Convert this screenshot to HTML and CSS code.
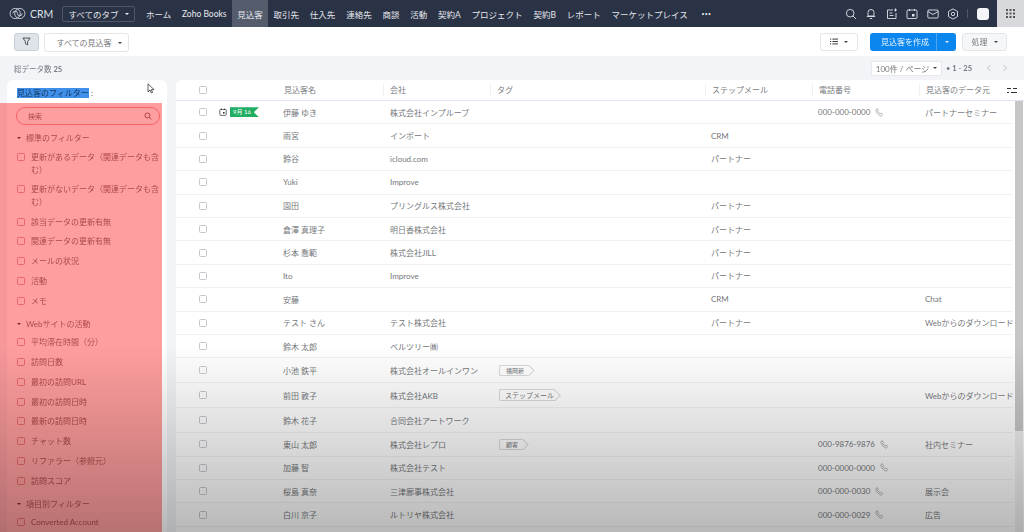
FILE: index.html
```html
<!DOCTYPE html>
<html lang="ja">
<head>
<meta charset="utf-8">
<title>見込客</title>
<link rel="stylesheet" href="styles.css">
</head>
<body>
<svg class="defs" width="0" height="0" aria-hidden="true">
  <symbol id="phone" viewBox="0 0 10 10"><path d="M1.2 1.6 2.6.8l1.3 2-.9.8c.5 1.2 1.4 2.2 2.7 2.8l.9-.8 2.1 1.6-1 1.3c-.3.4-.8.5-1.3.4C3.900 8 1.700 5.700 1 3c-.1-.5 0-1 .2-1.400Z" fill="none" stroke="currentColor" stroke-width=".7"/></symbol>
</svg>
<div class="app">
  <header class="topbar">
    <div class="brand">
      <svg class="logo" viewBox="0 0 18 14"><circle cx="6.500" cy="7" r="5.500"/><circle cx="11.500" cy="7" r="5.500"/><path d="M4 7a2.500 2.500 0 0 1 5 0 2.500 2.500 0 0 0 5 0"/></svg>
      <span>CRM</span>
    </div>
    <div class="tabs-btn">すべてのタブ<i class="caret light"></i></div>
    <nav class="nav">
      <a>ホーム</a><a>Zoho Books</a><a class="active">見込客</a><a>取引先</a><a>仕入先</a><a>連絡先</a><a>商談</a><a>活動</a><a>契約A</a><a>プロジェクト</a><a>契約B</a><a>レポート</a><a>マーケットプレイス</a><a class="dots">•••</a>
    </nav>
    <div class="top-icons">
      <svg viewBox="0 0 12 12"><circle cx="5.200" cy="5.200" r="3.800"/><path d="m8 8 3 3"/></svg>
      <svg viewBox="0 0 12 12"><path d="M6 1.500a3 3 0 0 1 3 3V8H3V4.500a3 3 0 0 1 3-3ZM1.800 8.500h8.400M4.800 10.500h2.400"/></svg>
      <svg viewBox="0 0 12 12"><path d="M7 2H1.500v8.500h8.500V5M3.500 5h3M3.500 7.500h4M9.500 .5v3M8 2h3"/></svg>
      <svg viewBox="0 0 12 12"><rect x="1" y="2" width="10" height="8.500" rx="1"/><path d="M3.500 1v2M8.500 1v2"/><rect class="fill" x="6" y="6" width="2.500" height="2.500"/></svg>
      <svg viewBox="0 0 12 12"><rect x=".8" y="2" width="10.400" height="8" rx="1"/><path d="m1 3.500 5 3 5-3"/></svg>
      <svg viewBox="0 0 12 12"><path d="M6 .9 10.500 3.400v5.200L6 11.100 1.500 8.600V3.400Z"/><circle cx="6" cy="6" r="1.700"/></svg>
      <span class="sep"></span>
      <span class="avatar"></span>
    </div>
    <div class="apps">
      <svg viewBox="0 0 9 9"><rect width="2" height="2"/><rect x="3.500" width="2" height="2"/><rect x="7" width="2" height="2"/><rect y="3.500" width="2" height="2"/><rect x="3.500" y="3.500" width="2" height="2"/><rect x="7" y="3.500" width="2" height="2"/><rect y="7" width="2" height="2"/><rect x="3.500" y="7" width="2" height="2"/><rect x="7" y="7" width="2" height="2"/></svg>
    </div>
  </header>

  <div class="toolbar">
    <button class="filter-btn"><svg viewBox="0 0 10 10"><path d="M1 1.200h8L6.200 5v3.800L3.800 7.500V5Z"/></svg></button>
    <button class="btn view-select">すべての見込客<i class="caret"></i></button>
    <div class="toolbar-right">
      <button class="btn list-btn"><svg viewBox="0 0 10 8"><path d="M0 1h1.500M3 1h7M0 4h1.500M3 4h7M0 7h1.500M3 7h7"/></svg><i class="caret"></i></button>
      <div class="create"><span class="create-main">見込客を作成</span><span class="create-drop"><i class="caret light"></i></span></div>
      <button class="btn action-btn">処理<i class="caret"></i></button>
    </div>
  </div>

  <div class="subbar">
    <span class="total">総データ数 <b>25</b></span>
    <div class="pager">
      <span class="per-page">100件 / ページ<i class="caret"></i></span>
      <span class="range">• <b>1</b> - <b>25</b></span>
      <svg class="chev" viewBox="0 0 6 8"><path d="M4.500 1 1.500 4l3 3"/></svg>
      <svg class="chev" viewBox="0 0 6 8"><path d="M1.500 1l3 3-3 3"/></svg>
    </div>
  </div>

  <main class="content">
    <aside class="side">
      <div class="side-title"><span class="selected">見込客のフィルター</span> :</div>
      <div class="search"><span>検索</span><svg viewBox="0 0 10 10"><circle cx="4.300" cy="4.300" r="3.100"/><path d="m6.600 6.600 2.600 2.600"/></svg></div>
      <h3 class="group first">標準のフィルター</h3>
      <label class="opt"><i></i><span>更新があるデータ（関連データも含む）</span></label>
      <label class="opt"><i></i><span>更新がないデータ（関連データも含む）</span></label>
      <label class="opt"><i></i><span>該当データの更新有無</span></label>
      <label class="opt"><i></i><span>関連データの更新有無</span></label>
      <label class="opt"><i></i><span>メールの状況</span></label>
      <label class="opt"><i></i><span>活動</span></label>
      <label class="opt"><i></i><span>メモ</span></label>
      <h3 class="group">Webサイトの活動</h3>
      <label class="opt"><i></i><span>平均滞在時間（分）</span></label>
      <label class="opt"><i></i><span>訪問日数</span></label>
      <label class="opt"><i></i><span>最初の訪問URL</span></label>
      <label class="opt"><i></i><span>最初の訪問日時</span></label>
      <label class="opt"><i></i><span>最新の訪問日時</span></label>
      <label class="opt"><i></i><span>チャット数</span></label>
      <label class="opt"><i></i><span>リファラー（参照元）</span></label>
      <label class="opt"><i></i><span>訪問スコア</span></label>
      <h3 class="group">項目別フィルター</h3>
      <label class="opt"><i></i><span>Converted Account</span></label>
    </aside>

    <section class="table">
      <div class="thead">
        <div class="c-check"><i class="box"></i></div>
        <div class="th">見込客名</div><div class="th">会社</div><div class="th">タグ</div><div class="th">ステップメール</div><div class="th">電話番号</div><div class="th">見込客のデータ元</div>
        <svg class="cols-icon" viewBox="0 0 10 7"><path d="M0 1.500h4M6 1.500h4M0 5.500h2M4 5.500h6"/></svg>
      </div>
      <div class="tbody">
        <div class="rows">
          <div class="row"><div class="c-check"><i class="box"></i><svg class="cal" viewBox="0 0 10 10"><rect x="1" y="1.800" width="8" height="7.400" rx="1"/><path d="M3 .6v2M7 .6v2"/><rect class="fill" x="5" y="5" width="2" height="2"/></svg><span class="due">9月 16</span></div><div>伊藤 ゆき</div><div>株式会社インプルーブ</div><div></div><div></div><div class="tel">000-000-0000<svg><use href="#phone"/></svg></div><div>パートナーセミナー</div></div>
          <div class="row"><div class="c-check"><i class="box"></i></div><div>雨宮</div><div>インポート</div><div></div><div>CRM</div><div></div><div></div></div>
          <div class="row"><div class="c-check"><i class="box"></i></div><div>鈴谷</div><div>icloud.com</div><div></div><div>パートナー</div><div></div><div></div></div>
          <div class="row"><div class="c-check"><i class="box"></i></div><div>Yuki</div><div>Improve</div><div></div><div></div><div></div><div></div></div>
          <div class="row"><div class="c-check"><i class="box"></i></div><div>園田</div><div>プリングルス株式会社</div><div></div><div>パートナー</div><div></div><div></div></div>
          <div class="row"><div class="c-check"><i class="box"></i></div><div>倉澤 真理子</div><div>明日香株式会社</div><div></div><div>パートナー</div><div></div><div></div></div>
          <div class="row"><div class="c-check"><i class="box"></i></div><div>杉本 喬範</div><div>株式会社JILL</div><div></div><div>パートナー</div><div></div><div></div></div>
          <div class="row"><div class="c-check"><i class="box"></i></div><div>Ito</div><div>Improve</div><div></div><div>パートナー</div><div></div><div></div></div>
          <div class="row"><div class="c-check"><i class="box"></i></div><div>安藤</div><div></div><div></div><div>CRM</div><div></div><div>Chat</div></div>
          <div class="row"><div class="c-check"><i class="box"></i></div><div>テスト さん</div><div>テスト株式会社</div><div></div><div>パートナー</div><div></div><div>Webからのダウンロード</div></div>
          <div class="row"><div class="c-check"><i class="box"></i></div><div>鈴木 太郎</div><div>ベルツリー㈱</div><div></div><div></div><div></div><div></div></div>
          <div class="row tall"><div class="c-check"><i class="box"></i></div><div>小池 鉄平</div><div>株式会社オールインワン</div><div><span class="tag small">福岡新</span></div><div></div><div></div><div></div></div>
          <div class="row tall"><div class="c-check"><i class="box"></i></div><div>前田 敦子</div><div>株式会社AKB</div><div><span class="tag">ステップメール</span></div><div></div><div></div><div>Webからのダウンロード</div></div>
          <div class="row tall"><div class="c-check"><i class="box"></i></div><div>鈴木 花子</div><div>合同会社アートワーク</div><div></div><div></div><div></div><div></div></div>
          <div class="row"><div class="c-check"><i class="box"></i></div><div>東山 太郎</div><div>株式会社レプロ</div><div><span class="tag small">顧客</span></div><div></div><div class="tel">000-9876-9876<svg><use href="#phone"/></svg></div><div>社内セミナー</div></div>
          <div class="row"><div class="c-check"><i class="box"></i></div><div>加藤 智</div><div>株式会社テスト</div><div></div><div></div><div class="tel">000-0000-0000<svg><use href="#phone"/></svg></div><div></div></div>
          <div class="row"><div class="c-check"><i class="box"></i></div><div>桜島 真奈</div><div>三津廊事株式会社</div><div></div><div></div><div class="tel">000-000-0030<svg><use href="#phone"/></svg></div><div>展示会</div></div>
          <div class="row"><div class="c-check"><i class="box"></i></div><div>白川 京子</div><div>ルトリヤ株式会社</div><div></div><div></div><div class="tel">000-000-0029<svg><use href="#phone"/></svg></div><div>広告</div></div>
        </div>
        <div class="scrollbar"><div class="thumb"></div></div>
      </div>
    </section>
  </main>
  <svg class="cursor" viewBox="0 0 8 11"><path d="M1 .8v8l2-1.800 1.300 3 1.300-.6L4.300 6.600H7Z"/></svg>
  <div class="red-mask"></div>
  <div class="fade"></div>
</div>
</body>
</html>
```
FILE: styles.css
```css
* { box-sizing: border-box; margin: 0; padding: 0; }
html, body { height: 532px; overflow: hidden; }
body { font-family: Lato, "Noto Sans CJK JP", sans-serif; font-size: 8px; color: #74777b; background: #f2f4f8; }
.defs { position: absolute; }
.app { position: relative; height: 532px; overflow: hidden; filter: blur(.45px); display: flex; flex-direction: column; }
button { font: inherit; color: inherit; }
i { font-style: normal; }

.caret { display: inline-block; width: 0; height: 0; border: 2px solid transparent; border-top: 2.5px solid #444; border-bottom: 0; margin-left: 6px; vertical-align: middle; }
.caret.light { border-top-color: #eef; }

.topbar { height: 27px; flex: none; background: #2a3245; color: #e6e8ee; display: flex; align-items: center; padding-left: 9px; }
.brand { display: flex; align-items: center; gap: 4px; font-size: 10.500px; width: 53px; color: #dfe3ea; }
.logo { width: 17px; height: 13px; fill: none; stroke: #dfe3ea; stroke-width: .9; }
.tabs-btn { width: 73px; height: 16px; border: 1px solid #4f586b; border-radius: 2px; font-size: 8.500px; display: flex; align-items: center; justify-content: center; }
.nav { display: flex; align-self: stretch; margin-left: 5.500px; }
.nav a { display: flex; align-items: center; padding: 0 5.400px; font-size: 8.500px; white-space: nowrap; }
.nav a.active { background: #555d6d; }
.nav a.dots { font-size: 5px; letter-spacing: .3px; margin-left: 3px; }
.top-icons { margin-left: auto; display: flex; align-items: center; gap: 8.500px; }
.top-icons svg { width: 12px; height: 12px; fill: none; stroke: #dfe3ea; stroke-width: .9; }
.top-icons .fill { fill: #dfe3ea; stroke: none; }
.sep { width: 1px; height: 9px; background: #4f586b; margin-left: -1px; }
.avatar { width: 12px; height: 12px; border-radius: 3px; background: #f4f5f7; margin: 0 8px 0 1px; }
.apps { width: 27px; align-self: stretch; background: #d8d9dc; display: flex; align-items: center; justify-content: center; }
.apps svg { width: 9px; height: 9px; fill: #555; }

.toolbar { height: 29px; flex: none; background: #fff; display: flex; align-items: center; padding: 0 17px 0 14px; }
.filter-btn { width: 25px; height: 18px; border: 1px solid #c9ced8; border-radius: 3px; background: #dfe3ea; display: flex; align-items: center; justify-content: center; }
.filter-btn svg { width: 9px; height: 9px; fill: none; stroke: #444; stroke-width: 1; }
.btn { background: #fff; border: 1px solid #e2e5ea; border-radius: 3px; height: 19px; display: flex; align-items: center; justify-content: center; }
.view-select { width: 85px; margin-left: 5px; margin-top: 2px; padding-left: 5px; color: #74777b; }
.toolbar-right { margin-left: auto; display: flex; align-items: center; }
.list-btn { width: 38px; height: 18px; }
.list-btn svg { width: 8px; height: 7px; stroke: #333; stroke-width: 1.200; fill: none; }
.create { margin-left: 12px; width: 86px; height: 18px; border-radius: 3px; background: #0a86ee; color: #eaf4ff; display: flex; align-items: center; }
.create-main { width: 67px; padding-left: 4px; text-align: center; border-right: 1px solid #4aa5f2; line-height: 18px; }
.create-drop { flex: 1; text-align: center; }
.create-drop .caret { margin: 0; }
.action-btn { margin-left: 6px; width: 45px; height: 18px; background: #f6f7f9; color: #74777b; }

.subbar { height: 24px; flex: none; display: flex; align-items: center; padding: 0 17px 0 14px; }
.total { color: #74777b; font-size: 7.500px; }
.total b { font-weight: 700; }
.pager { margin-left: auto; display: flex; align-items: center; }
.per-page { width: 71px; height: 15px; background: #fff; border: 1px solid #e6e8ee; border-radius: 2px; display: flex; align-items: center; justify-content: center; font-size: 8px; }
.per-page .caret { margin-left: 4px; }
.range { margin-left: 4px; width: 32px; font-size: 7.500px; color: #74777b; }
.chev { width: 6px; height: 8px; fill: none; stroke: #bbb; stroke-width: .9; margin-left: 8px; }
.chev + .chev { margin-left: 10px; margin-right: -1px; }

.content { flex: 1; min-height: 0; display: flex; gap: 9px; padding-left: 7px; }
.side { width: 160px; flex: none; background: #fff; border-radius: 6px 6px 0 0; padding: 7px 6px 0 10px; overflow: hidden; color: #7d7779; }
.side-title { line-height: 12px; white-space: nowrap; color: #555; }
.selected { background: #3f90ea; color: #16365a; }
.search { height: 18px; margin: 8px 1px 0 -1px; border: 1px solid #e9a0a2; border-radius: 9px; display: flex; align-items: center; justify-content: space-between; padding: 0 7px 0 11px; font-size: 7px; }
.search svg { width: 8px; height: 8px; fill: none; stroke: #5b4a4c; stroke-width: 1; }
.group { font-size: 8px; font-weight: 400; line-height: 12px; margin: 11px 0 6px; padding-left: 9px; position: relative; white-space: nowrap; }
.group.first { margin-top: 7px; margin-bottom: 7px; }
.group::before { content: ""; position: absolute; left: 0; top: 5px; border: 2px solid transparent; border-top: 2.500px solid #4a3435; border-bottom: 0; }
.opt { display: flex; gap: 6px; line-height: 12.500px; margin-bottom: 7.300px; }
.opt i { width: 8px; height: 8px; flex: none; margin-top: 2px; border: 1px solid #d8a5a7; border-radius: 1.500px; }

.table { flex: 1; min-width: 0; background: #fff; border-radius: 6px 0 0 0; display: flex; flex-direction: column; }
.thead { height: 21px; flex: none; display: grid; grid-template-columns: 100px 107px 107px 215px 107px 107px 94px 11px; align-items: center; border-bottom: 1px solid #dde6f0; }
.th { height: 12px; line-height: 12px; border-left: 1px solid #eef0f3; padding-left: 6px; white-space: nowrap; color: #7a7d82; }
.thead .th:nth-child(2) { border-left-color: transparent; padding-left: 7px; }
.cols-icon { width: 10px; height: 7px; stroke: #333; stroke-width: 1.100; margin-left: -6px; }
.c-check { display: flex; align-items: center; padding-left: 23px; gap: 0; }
.box { width: 8px; height: 8px; flex: none; border: 1px solid #c4c7cc; border-radius: 1.500px; }
.cal { width: 8px; height: 8px; margin-left: 12px; fill: none; stroke: #333; stroke-width: .9; }
.cal .fill { fill: #333; stroke: none; }
.due { margin-left: 3px; width: 29px; height: 10px; line-height: 10px; background: #1fae63; color: #fff; font-size: 6px; padding-left: 3px; clip-path: polygon(0 0, 100% 0, 82% 50%, 100% 100%, 0 100%); white-space: nowrap; }

.tbody { flex: 1; min-height: 0; display: flex; }
.rows { width: 837px; flex: none; }
.row { height: 23.400px; display: grid; grid-template-columns: 100px 107px 107px 215px 107px 107px 94px; align-items: center; border-bottom: 1px solid #eef2f7; white-space: nowrap; }
.row.tall { height: 25px; }
.row > div { overflow: hidden; padding-left: 6px; }
.row > div:nth-child(2) { padding-left: 7px; }
.row > div:nth-child(3) { padding-left: 7px; }
.row > .c-check { padding-left: 23px; overflow: visible; }
.tel { display: flex; align-items: center; gap: 5px; }
.tel svg { width: 9px; height: 9px; color: #8a8d92; }
.tag { display: inline-block; position: relative; height: 12px; line-height: 10px; font-size: 7px; padding: 0 1px 0 5px; border: 1px solid #d8d9dc; border-right: 0; border-radius: 2px 0 0 2px; margin-right: 5px; margin-left: 3px; }
.tag::after { content: ""; position: absolute; right: -4px; top: 1px; width: 8px; height: 8px; border-top: 1px solid #d8d9dc; border-right: 1px solid #d8d9dc; transform: rotate(45deg); }
.tag.small { font-size: 6px; padding-left: 6px; padding-right: 4px; height: 11px; }
.tag.small::after { top: .5px; width: 7.500px; height: 7.500px; }

.scrollbar { width: 7.500px; margin-left: 2px; background: #f0f0f0; flex: none; }
.thumb { height: 330px; background: #c6c6c6; }

.cursor { position: absolute; left: 147px; top: 83px; width: 8px; height: 11px; fill: #fff; stroke: #333; stroke-width: .8; }
.red-mask { position: absolute; left: 0; top: 103px; bottom: 0; width: 162px; background: rgba(255, 0, 0, .38); pointer-events: none; }
.fade { position: absolute; left: 0; right: 0; top: 345px; bottom: 0; background: linear-gradient(rgba(0,0,0,0), rgba(0,0,0,.28)); pointer-events: none; }
```
